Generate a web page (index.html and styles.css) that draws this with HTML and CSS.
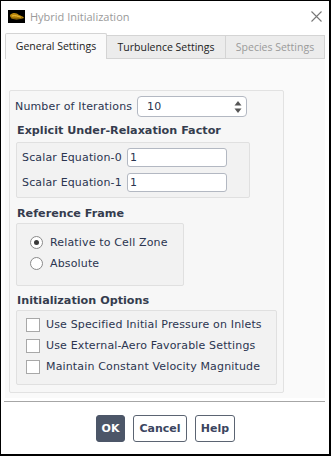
FILE: index.html
```html
<!DOCTYPE html>
<html>
<head>
<meta charset="utf-8">
<link rel="stylesheet" href="styles.css">
</head>
<body>
<div class="window">
  <div class="titlebar">
    <svg class="appicon" width="17" height="13" viewBox="0 0 17 13">
      <rect width="17" height="13" fill="#000"/>
      <path d="M2 5 C5 2,9 3,11 5 C13 6,15 6,16 8 C13 9,9 10,5 9 C3 8.5,2 7,2 5Z" fill="#b8860b"/>
      <path d="M4 6 C7 5,10 6,13 7.5" stroke="#f0c040" stroke-width="1" fill="none"/>
      <path d="M3 8 C6 8.5,10 8.5,14 8" stroke="#6b4a00" stroke-width="0.8" fill="none"/>
    </svg>
    <span class="title">Hybrid Initialization</span>
    <svg class="close" width="11" height="11" viewBox="0 0 11 11">
      <path d="M0.5 0.5 L10.5 10.5 M10.5 0.5 L0.5 10.5" stroke="#777" stroke-width="1.1"/>
    </svg>
  </div>
  <div class="tabs">
    <div class="tab active">General Settings</div>
    <div class="tab">Turbulence Settings</div>
    <div class="tab disabled">Species Settings</div>
  </div>
  <div class="content">
    <div class="group">
      <div class="row iter">
        <span class="label">Number of Iterations</span>
        <div class="spin">
          <span class="val">10</span>
          <svg class="arrows" width="8" height="14" viewBox="0 0 8 14">
            <path d="M4 1 L7.5 5.5 L0.5 5.5Z" fill="#555"/>
            <path d="M4 13 L7.5 8.5 L0.5 8.5Z" fill="#555"/>
          </svg>
        </div>
      </div>
      <div class="heading h-relax">Explicit Under-Relaxation Factor</div>
      <div class="box box-relax">
        <div class="row eq">
          <span class="label">Scalar Equation-0</span>
          <div class="input">1</div>
        </div>
        <div class="row eq">
          <span class="label">Scalar Equation-1</span>
          <div class="input">1</div>
        </div>
      </div>
      <div class="heading">Reference Frame</div>
      <div class="box box-frame">
        <div class="opt"><span class="radio checked"></span><span class="label">Relative to Cell Zone</span></div>
        <div class="opt"><span class="radio"></span><span class="label">Absolute</span></div>
      </div>
      <div class="heading">Initialization Options</div>
      <div class="box box-init">
        <div class="opt"><span class="check"></span><span class="label">Use Specified Initial Pressure on Inlets</span></div>
        <div class="opt"><span class="check"></span><span class="label">Use External-Aero Favorable Settings</span></div>
        <div class="opt"><span class="check"></span><span class="label">Maintain Constant Velocity Magnitude</span></div>
      </div>
    </div>
  </div>
  <div class="separator"></div>
  <div class="buttons">
    <div class="btn primary">OK</div>
    <div class="btn cancel">Cancel</div>
    <div class="btn help">Help</div>
  </div>
</div>
</body>
</html>
```

FILE: styles.css
```css
* { box-sizing: border-box; }
html, body { margin: 0; padding: 0; background: #fff; }
body { width: 331px; height: 456px; overflow: hidden; }
.window {
  width: 331px; height: 456px;
  border: 1px solid #000;
  border-right-width: 2px;
  border-bottom-width: 2px;
  background: #fff;
  display: flex; flex-direction: column;
  font-family: "DejaVu Sans", sans-serif;
  font-size: 11px;
  letter-spacing: 0.15px;
  color: #2b3550;
}
.titlebar {
  height: 31px; flex: none;
  display: flex; align-items: center;
  padding-left: 7px;
}
.appicon { margin-right: 5px; margin-top: -1px; }
.title {
  font-family: "Open Sans", "Noto Sans", sans-serif;
  font-size: 11px; color: #9a9a9a; letter-spacing: 0;
}
.close { margin-left: auto; margin-right: 7px; }
.tabs {
  flex: none;
  display: flex; align-items: flex-end;
  margin: 1px 4px 0 4px;
  height: 26px;
  border-bottom: 1px solid #d4d4d4;
  font-family: "Open Sans", "Noto Sans", sans-serif;
  font-size: 10.5px;
  letter-spacing: 0;
}
.tab {
  height: 23px;
  border: 1px solid #d4d4d4;
  border-bottom: none;
  background: #ececec;
  color: #222;
  display: flex; align-items: center; justify-content: center;
}
.tab:nth-child(1) { width: 102px; }
.tab:nth-child(2) { width: 119px; border-left: none; }
.tab:nth-child(3) { width: 99px; border-left: none; }
.tab.active {
  height: 26px; background: #fafafa; margin-bottom: -1px;
  border-radius: 2px 2px 0 0;
  padding-bottom: 1px;
}
.tab.disabled { color: #9a9a9a; }
.content {
  flex: none;
  height: 339px;
  margin: 0 4px;
  background: #fafafa;
  padding: 31px 0 0 4px;
}
.group {
  width: 275px; height: 303px;
  border: 1px solid #e2e2e2;
  border-radius: 2px;
  background: #f7f7f7;
  padding: 4px 0 0 5px;
}
.row { display: flex; align-items: center; }
.iter { height: 23px; }
.iter .label { width: 122px; white-space: nowrap; }
.spin {
  width: 110px; height: 21px;
  border: 1px solid #b3b8c2;
  border-radius: 4px;
  background: #fff;
  display: flex; align-items: center;
  padding-left: 9px; padding-right: 4px;
}
.spin .val { flex: 1; }
.heading {
  font-weight: bold; font-size: 11.2px;
  letter-spacing: 0;
  color: #353c4e;
  margin: 0 0 0 2px;
  height: 17px; line-height: 17px;
}
.h-relax { margin-top: 4px; }
.box {
  margin-left: 1px;
  border: 1px solid #e0e0e0;
  border-radius: 2px;
  background: #f2f2f2;
  margin-top: 1px;
}
.box-relax { width: 234px; height: 56px; margin-top: 3px; padding: 2px 0 0 5px; margin-bottom: 7px; }
.eq { height: 25px; }
.eq .label { width: 105px; white-space: nowrap; }
.input {
  width: 100px; height: 19px;
  border: 1px solid #b3b8c2; border-radius: 3px;
  background: #fff;
  padding-left: 2px; line-height: 17px;
}
.box-frame { width: 168px; height: 63px; padding: 8px 0 0 13px; margin-bottom: 6px; }
.opt { display: flex; align-items: center; height: 21px; white-space: nowrap; }
.radio {
  width: 13px; height: 13px; border-radius: 50%;
  border: 1px solid #8a8a8a; background: #fff;
  margin-right: 7px;
  display: flex; align-items: center; justify-content: center;
}
.radio.checked::after {
  content: ""; width: 5px; height: 5px; border-radius: 50%; background: #3a3a3a;
}
.box-init { width: 261px; height: 75px; padding: 3px 0 0 9px; }
.check {
  width: 14px; height: 14px;
  border: 1px solid #a8a8a8; background: #fff;
  margin-right: 6px;
}
.separator {
  flex: none;
  margin: 3px 4px 0 3px;
  height: 1px; background: #a6a6a6;
}
.buttons {
  flex: none;
  display: flex; gap: 8px;
  padding-top: 13px;
  padding-left: 95px;
}
.btn {
  height: 27px;
  border: 1px solid #5b6472;
  border-radius: 3px;
  background: #fff;
  color: #3b4560;
  font-weight: bold; font-size: 11px; letter-spacing: 0;
  display: flex; align-items: center; justify-content: center;
}
.btn.primary { background: #4c5668; color: #fff; border-color: #4c5668; width: 29px; }
.btn.cancel { width: 54px; }
.btn.help { width: 40px; }
```
